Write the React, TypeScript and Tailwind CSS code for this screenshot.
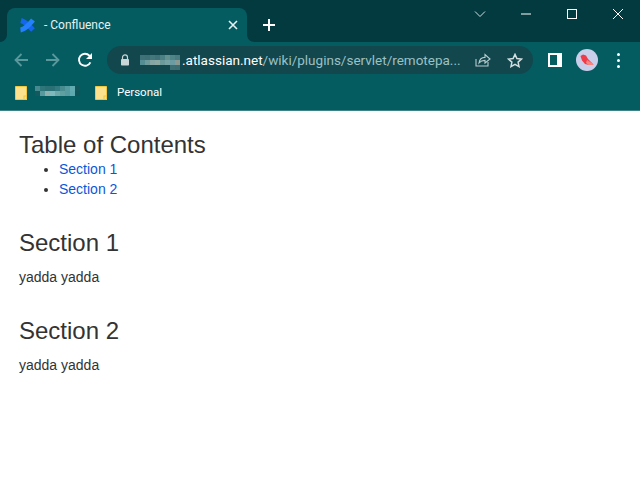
const ui = { fontFamily: 'Roboto, "Open Sans", sans-serif' };

const mosaicAddr: string[][] = [
  ["#3f7278", "#3d7076", "#44777b", "#3f7278", "#4b7f83", "#63908f", "#4f8488", "#487c82"],
  ["#548d93", "#6f9a9b", "#84a5a3", "#8ba9a2", "#6c9a9b", "#76a2a3", "#6b9ca3", "#8a9a92"],
  ["", "", "", "", "", "", "#3b6f74", "#3a6d72"],
];
const mosaicBook: string[][] = [
  ["#468a90", "#2f767b", "#2a7075", "#2a7075", "#327a7f", "#488c90", "#549a9e", "#62abb1", "#11565a"],
  ["#14595d", "#5a9a9e", "#8fb0ac", "#7fb8bd", "#6fa8a9", "#5f9fa1", "#549a9f", "#5fa8af", "#0e5559"],
];

function Mosaic({ rows, cell }: { rows: string[][]; cell: string }) {
  return (
    <div className="flex flex-col">
      {rows.map((r, i) => (
        <div key={i} className="flex">
          {r.map((c, j) => (
            <div key={j} className={cell} style={{ background: c || "transparent" }} />
          ))}
        </div>
      ))}
    </div>
  );
}

function Folder() {
  return (
    <svg width="12" height="14" viewBox="0 0 12 14" className="shrink-0 mb-[2px]">
      <path d="M0.5 0.5H11.5V13.5H0.5Z" fill="#fde28e" stroke="#f4c63e" strokeWidth="1" />
      <rect x="9" y="10" width="2.5" height="3.5" fill="#fde28e" stroke="#f4c63e" strokeWidth="1" />
    </svg>
  );
}

function Flare({ side }: { side: "l" | "r" }) {
  return (
    <svg
      width="8"
      height="8"
      viewBox="0 0 8 8"
      className={side === "l" ? "absolute bottom-0 left-[-8px]" : "absolute bottom-0 right-[-8px]"}
    >
      <path d={side === "l" ? "M8 0V8H0C5 8 8 5 8 0Z" : "M0 0V8H8C3 8 0 5 0 0Z"} fill="#045c61" />
    </svg>
  );
}

export default function App() {
  return (
    <div className="w-[640px] h-[500px] bg-white overflow-hidden flex flex-col">
      {/* Title bar */}
      <div className="h-[42px] bg-[#023a40] flex items-start shrink-0" style={ui}>
        <div className="relative ml-[7px] mt-[8px] w-[240px] h-[34px] bg-[#045c61] rounded-t-[8px] flex items-center pl-[12px] pr-[9px] shrink-0">
          <Flare side="l" />
          <Flare side="r" />
          <svg width="16" height="16" viewBox="0 0 16 16" className="shrink-0">
            <path d="M2 3.5C6 4.5 10 8.5 14 13" stroke="#1566ee" strokeWidth="5" fill="none" />
            <path d="M1.5 13C6 12.5 10 8 14 3" stroke="#2480fd" strokeWidth="5" fill="none" />
          </svg>
          <span className="ml-[9px] text-[12px] text-[#e6f2f2] whitespace-nowrap">- Confluence</span>
          <svg width="10" height="10" viewBox="0 0 10 10" className="ml-auto">
            <path d="M1 1L9 9M9 1L1 9" stroke="#e8f1f1" strokeWidth="1.6" />
          </svg>
        </div>
        <svg width="12" height="12" viewBox="0 0 12 12" className="ml-[16px] mt-[19px] shrink-0">
          <path d="M6 0V12M0 6H12" stroke="#fff" strokeWidth="2" />
        </svg>
        <div className="ml-auto -mr-[1px] flex h-[28px] text-white">
          <div className="w-[46px] flex items-center justify-center">
            <svg width="12" height="8" viewBox="0 0 12 8">
              <path d="M1 1.5L6 6.5L11 1.5" stroke="#cfe0e2" strokeWidth="1" fill="none" />
            </svg>
          </div>
          <div className="w-[46px] flex items-center justify-center">
            <svg width="10" height="2" viewBox="0 0 10 2">
              <path d="M0 1H10" stroke="#fff" strokeWidth="1" />
            </svg>
          </div>
          <div className="w-[46px] flex items-center justify-center">
            <svg width="10" height="10" viewBox="0 0 10 10">
              <rect x="0.5" y="0.5" width="9" height="9" stroke="#fff" strokeWidth="1" fill="none" />
            </svg>
          </div>
          <div className="w-[46px] flex items-center justify-center">
            <svg width="10" height="10" viewBox="0 0 10 10">
              <path d="M0 0L10 10M10 0L0 10" stroke="#fff" strokeWidth="1" />
            </svg>
          </div>
        </div>
      </div>

      {/* Toolbar */}
      <div className="h-[36px] bg-[#045c61] flex items-center shrink-0" style={ui}>
        <div className="w-[14px] shrink-0" />
        <svg width="14" height="14" viewBox="0 0 14 14" className="shrink-0">
          <path d="M14 7H1.5M7.5 1L1.5 7L7.5 13" stroke="#5a989c" strokeWidth="1.8" fill="none" />
        </svg>
        <svg width="14" height="14" viewBox="0 0 14 14" className="ml-[18px] shrink-0">
          <path d="M0 7H12.5M6.5 1L12.5 7L6.5 13" stroke="#5a989c" strokeWidth="1.8" fill="none" />
        </svg>
        <svg width="16" height="16" viewBox="0 0 16 16" className="ml-[17px] shrink-0">
          <path d="M13.4 10.4A6 6 0 1 1 12.4 3.7L14.2 5.4" stroke="#fff" strokeWidth="1.9" fill="none" />
          <path d="M15 1V7H9Z" fill="#fff" />
        </svg>
        <div className="ml-[14px] w-[426px] h-[28px] rounded-full bg-[#11474d] flex items-center pl-[13px] pr-[10px] shrink-0">
          <svg width="10" height="12" viewBox="0 0 10 12" className="shrink-0">
            <path d="M2.5 5V3.4a2.5 2.5 0 0 1 5 0V5" stroke="#c8d6d8" strokeWidth="1.2" fill="none" />
            <rect x="1" y="5" width="8" height="6.5" rx="0.8" fill="#c8d6d8" />
          </svg>
          <div className="ml-[10px] shrink-0 mt-[5px]">
            <Mosaic rows={mosaicAddr} cell="w-[5px] h-[5px]" />
          </div>
          <div className="ml-[2px] text-[13.5px] whitespace-nowrap shrink-0">
            <span className="text-white">.atlassian.net</span>
            <span className="text-[#9cc0c4]">/wiki/plugins/servlet/remotepa...</span>
          </div>
          <svg width="16" height="14" viewBox="0 0 16 14" className="ml-auto shrink-0">
            <path d="M1 6V13H13V9" stroke="#b9cccf" strokeWidth="1.1" fill="none" />
            <path d="M4 10C4.5 6.5 7 4.4 10 4.4V1.5L15 6L10 10V7.4C7.5 7.4 5.5 8.2 4 10Z" stroke="#b9cccf" strokeWidth="1.1" fill="none" />
          </svg>
          <svg width="16" height="15" viewBox="0 0 16 15" className="ml-[16px] shrink-0">
            <path d="M8 1.4L9.9 5.6L14.5 6.1L11.1 9.1L12 13.6L8 11.4L4 13.6L4.9 9.1L1.5 6.1L6.1 5.6Z" stroke="#d3dfe1" strokeWidth="1.5" fill="none" />
          </svg>
        </div>
        <div className="ml-[15px] w-[14px] h-[14px] bg-white flex items-center shrink-0 pl-[2px]">
          <div className="w-[7px] h-[10px] bg-[#045c61]" />
        </div>
        <div className="ml-[14px] w-[22px] h-[22px] rounded-full bg-[#c9cfea] flex items-center justify-center shrink-0">
          <svg width="14" height="12" viewBox="0 0 14 12">
            <path d="M0.5 2L3 0.5L6 1.5L8 5L12 9L13.5 11L9 11L5 10L2 6.5Z" fill="#ef3a4a" />
            <path d="M7 6L12 9L13.5 11L8.5 11L6 9Z" fill="#f6857f" />
          </svg>
        </div>
        <div className="ml-[19px] flex flex-col gap-[3px] shrink-0">
          <div className="w-[3px] h-[3px] rounded-full bg-white" />
          <div className="w-[3px] h-[3px] rounded-full bg-white" />
          <div className="w-[3px] h-[3px] rounded-full bg-white" />
        </div>
      </div>

      {/* Bookmarks */}
      <div className="h-[33px] bg-[#045c61] border-b border-[#3c8487] flex items-center pl-[15px] text-[11.5px] text-white shrink-0" style={ui}>
        <Folder />
        <div className="ml-[8px] mr-[15px] mb-[6px]">
          <Mosaic rows={mosaicBook} cell="w-[5px] h-[5px]" />
        </div>
        <Folder />
        <span className="ml-[10px] mb-[3px]">Personal</span>
      </div>

      {/* Page */}
      <div className="flex-1 pl-[19px] pt-[20px] text-[14px] leading-[20px] text-[#333]" style={{ fontFamily: '"Liberation Sans", Arial, sans-serif' }}>
        <h1 className="text-[24px] leading-[28px]">Table of Contents</h1>
        <ul className="list-disc pl-[40px]">
          <li><a className="text-[#0b57d8]">Section 1</a></li>
          <li><a className="text-[#0b57d8]">Section 2</a></li>
        </ul>
        <h2 className="text-[24px] leading-[28px] mt-[30px]">Section 1</h2>
        <p className="mt-[10px]">yadda yadda</p>
        <h2 className="text-[24px] leading-[28px] mt-[30px]">Section 2</h2>
        <p className="mt-[10px]">yadda yadda</p>
      </div>
    </div>
  );
}
